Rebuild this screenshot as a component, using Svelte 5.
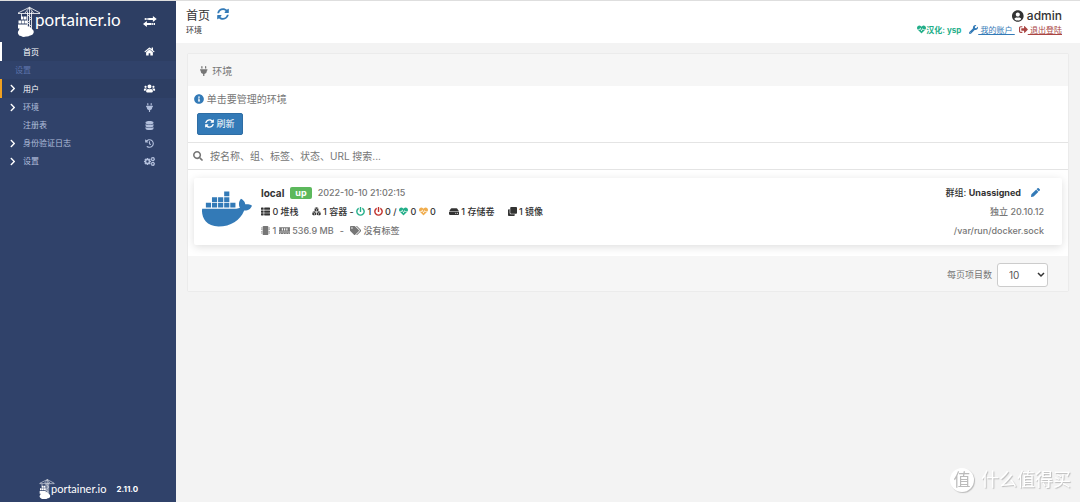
<script>
	let search = $state("");
	let pageSize = $state("10");

	// outline of one toothed wheel with a round hole
	function gear(cx, cy, r, teeth) {
		const points = [];
		for (let i = 0; i < teeth; i++) {
			[[-0.5, 0.78], [-0.32, 1], [0.32, 1], [0.5, 0.78]].forEach(([o, k]) => {
				const a = ((i + o * 0.8) / teeth) * Math.PI * 2;
				points.push(`${(cx + Math.cos(a) * r * k).toFixed(1)} ${(cy + Math.sin(a) * r * k).toFixed(1)}`);
			});
		}
		const h = r * 0.34;
		return `M${points.join("L")}ZM${cx - h} ${cy}a${h} ${h} 0 1 0 ${2 * h} 0a${h} ${h} 0 1 0 ${-2 * h} 0Z`;
	}

	function cube(x, y) {
		return `M${x} ${y}l110-46 110 46-110 46zM${x} ${y + 28}l98 42v126l-98-46zM${x + 220} ${y + 28}l-98 42v126l98-46z`;
	}

	const icons = {
		home: [576, "M280.37 148.26L96 300.11V464a16 16 0 0 0 16 16l112.06-.29a16 16 0 0 0 15.92-16V368a16 16 0 0 1 16-16h64a16 16 0 0 1 16 16v95.64a16 16 0 0 0 16 16.05L464 480a16 16 0 0 0 16-16V300L295.67 148.26a12.19 12.19 0 0 0-15.3 0zM571.6 251.47L488 182.56V44.05a12 12 0 0 0-12-12h-56a12 12 0 0 0-12 12v72.61L318.47 43a48 48 0 0 0-61 0L4.34 251.47a12 12 0 0 0-1.6 16.9l25.5 31A12 12 0 0 0 45.15 301l235.22-193.74a12.19 12.19 0 0 1 15.3 0L530.9 301a12 12 0 0 0 16.9-1.6l25.5-31a12 12 0 0 0-1.7-16.93z"],
		users: [640, "M96 224c35.3 0 64-28.7 64-64s-28.7-64-64-64-64 28.7-64 64 28.7 64 64 64zm448 0c35.3 0 64-28.7 64-64s-28.7-64-64-64-64 28.7-64 64 28.7 64 64 64zm32 32h-64c-17.6 0-33.5 7.1-45.1 18.6 40.3 22.1 68.9 62 75.1 109.4h66c17.7 0 32-14.3 32-32v-32c0-35.3-28.7-64-64-64zm-256 0c61.9 0 112-50.1 112-112S381.9 32 320 32 208 82.1 208 144s50.1 112 112 112zm76.8 32h-8.3c-20.8 10-43.9 16-68.5 16s-47.6-6-68.5-16h-8.3C179.6 288 128 339.6 128 403.2V432c0 26.5 21.5 48 48 48h288c26.5 0 48-21.5 48-48v-28.8c0-63.6-51.6-115.2-115.2-115.2zm-223.7-13.4C161.5 263.1 145.6 256 128 256H64c-35.3 0-64 28.7-64 64v32c0 17.7 14.3 32 32 32h65.9c6.3-47.4 34.9-87.3 75.2-109.4z"],
		plug: [384, "M320,32a32,32,0,0,0-64,0v96h64Zm48,128H16A16,16,0,0,0,0,176v32a16,16,0,0,0,16,16H32v32A160.07,160.07,0,0,0,160,412.8V512h64V412.8A160.07,160.07,0,0,0,352,256V224h16a16,16,0,0,0,16-16V176A16,16,0,0,0,368,160ZM128,32a32,32,0,0,0-64,0v96h64Z"],
		database: [448, "M448 73.143v45.714C448 159.143 347.667 192 224 192S0 159.143 0 118.857V73.143C0 32.857 100.333 0 224 0s224 32.857 224 73.143zM448 176v102.857C448 319.143 347.667 352 224 352S0 319.143 0 278.857V176c48.125 33.143 136.208 48.572 224 48.572S399.874 209.143 448 176zm0 160v102.857C448 479.143 347.667 512 224 512S0 479.143 0 438.857V336c48.125 33.143 136.208 48.572 224 48.572S399.874 369.143 448 336z"],
		history: [512, "M504 255.531c.253 136.64-111.18 248.372-247.82 248.468-59.015.042-113.223-20.53-155.822-54.911-11.077-8.94-11.905-25.541-1.839-35.607l11.267-11.267c8.609-8.609 22.353-9.551 31.891-1.984C173.062 425.135 212.781 440 256 440c101.705 0 184-82.311 184-184 0-101.705-82.311-184-184-184-48.814 0-93.149 18.969-126.068 49.932l50.754 50.754c10.08 10.08 2.941 27.314-11.313 27.314H24c-8.837 0-16-7.163-16-16V38.627c0-14.254 17.234-21.393 27.314-11.314l49.372 49.372C129.209 34.136 189.552 8 256 8c136.81 0 247.747 110.78 248 247.531zm-180.912 78.784l9.823-12.63c8.138-10.463 6.253-25.542-4.21-33.679L288 256.349V152c0-13.255-10.745-24-24-24h-16c-13.255 0-24 10.745-24 24v135.651l65.409 50.874c10.463 8.137 25.541 6.253 33.679-4.21z"],
		cogs: [640, gear(205, 256, 205, 8) + gear(510, 122, 130, 6) + gear(510, 390, 130, 6)],
		chevron: [320, "M285.5 273L91 467.3c-9.4 9.4-24.6 9.4-34 0l-22.600-22.700c-9.400-9.400-9.400-24.500 0-33.900L188.500 256 34.500 101.300c-9.300-9.400-9.300-24.500 0-33.900L57 44.700c9.400-9.400 24.600-9.400 34 0L285.500 239c9.400 9.400 9.400 24.600 0 34z"],
		toggle: [640, "M240 90h220V0l180 140-180 140V190H240zM160 90h55v100h-55zM80 90h55v100H80zM400 322H180v-90L0 372l180 140v-90h220zM425 322h55v100h-55zM505 322h55v100h-55z"],
		sync: [512, "M370.72 133.28C339.458 104.008 298.888 87.962 255.848 88c-77.458.068-144.328 53.178-162.791 126.85-1.344 5.363-6.122 9.15-11.651 9.15H24.103c-7.498 0-13.194-6.807-11.807-14.176C33.933 94.924 134.813 8 256 8c66.448 0 126.791 26.136 171.315 68.685L463.03 40.97C478.149 25.851 504 36.559 504 57.941V192c0 13.255-10.745 24-24 24H345.941c-21.382 0-32.09-25.851-16.971-40.971l41.75-41.749zM32 296h134.059c21.382 0 32.09 25.851 16.971 40.971l-41.75 41.75c31.262 29.273 71.835 45.319 114.876 45.28 77.418-.07 144.315-53.144 162.787-126.849 1.344-5.363 6.122-9.15 11.651-9.15h57.304c7.498 0 13.194 6.807 11.807 14.176C478.067 417.076 377.187 504 256 504c-66.448 0-126.791-26.136-171.315-68.685L48.97 471.03C33.851 486.149 8 475.441 8 454.059V320c0-13.255 10.745-24 24-24z"],
		search: [512, "M505 442.7L405.3 343c-4.5-4.5-10.6-7-17-7H372c27.6-35.3 44-79.7 44-128C416 93.1 322.9 0 208 0S0 93.1 0 208s93.1 208 208 208c48.3 0 92.7-16.4 128-44v16.3c0 6.4 2.5 12.5 7 17l99.7 99.7c9.4 9.4 24.6 9.4 33.9 0l28.3-28.3c9.4-9.4 9.4-24.6.1-34zM208 336c-70.7 0-128-57.2-128-128 0-70.7 57.2-128 128-128 70.7 0 128 57.2 128 128 0 70.7-57.2 128-128 128z"],
		info: [512, "M256 8C119.043 8 8 119.083 8 256c0 136.997 111.043 248 248 248s248-111.003 248-248C504 119.083 392.957 8 256 8zm0 110c23.196 0 42 18.804 42 42s-18.804 42-42 42-42-18.804-42-42 18.804-42 42-42zm56 254c0 6.627-5.373 12-12 12h-88c-6.627 0-12-5.373-12-12v-24c0-6.627 5.373-12 12-12h12v-64h-12c-6.627 0-12-5.373-12-12v-24c0-6.627 5.373-12 12-12h64c6.627 0 12 5.373 12 12v100h12c6.627 0 12 5.373 12 12v24z"],
		user: [496, "M248 8C111 8 0 119 0 256s111 248 248 248 248-111 248-248S385 8 248 8zm0 96c48.6 0 88 39.4 88 88s-39.4 88-88 88-88-39.4-88-88 39.4-88 88-88zm0 344c-58.7 0-111.3-26.6-146.5-68.2 18.8-35.4 55.6-59.8 98.5-59.8 2.4 0 4.8.4 7.1 1.1 13 4.2 26.6 6.9 40.9 6.9 14.3 0 28-2.7 40.9-6.9 2.3-.7 4.7-1.1 7.1-1.1 42.9 0 79.7 24.4 98.5 59.8C359.3 421.4 306.7 448 248 448z"],
		heart: [512, "M320.2 243.8l-49.7 99.4c-6 12.1-23.4 11.7-28.9-.6l-56.9-126.3-30 71.7H60.6l182.5 186.5c7.1 7.3 18.6 7.3 25.7 0L451.4 288H342.3l-22.1-44.2zM473.7 73.9l-2.4-2.5c-51.5-52.6-135.8-52.6-187.4 0L256 100l-27.9-28.5c-51.5-52.7-135.9-52.7-187.4 0l-2.4 2.4C-10.4 123.7-12.5 203 31 256h102.4l35.9-86.2c5.4-12.9 23.6-13.2 29.4-.4l58.2 129.3 49-97.9c5.9-11.8 22.7-11.8 28.6 0l27.6 55.2H481c43.5-53 41.4-132.3-7.3-182.1z"],
		wrench: [512, "M507.73 109.1c-2.24-9.03-13.54-12.09-20.12-5.51l-74.36 74.36-67.88-11.31-11.31-67.88 74.36-74.36c6.62-6.62 3.43-17.9-5.66-20.16-47.38-11.74-99.55.91-136.58 37.93-39.64 39.64-50.55 97.1-34.05 147.2L18.74 402.76c-24.99 24.99-24.99 65.51 0 90.5 24.99 24.99 65.51 24.99 90.5 0l213.21-213.21c50.12 16.71 107.47 5.68 147.37-34.22 37.07-37.07 49.7-89.32 37.91-136.73zM64 472c-13.25 0-24-10.75-24-24 0-13.26 10.75-24 24-24s24 10.74 24 24c0 13.25-10.75 24-24 24z"],
		logout: [512, "M497 273L329 441c-15 15-41 4.5-41-17v-96H152c-13.3 0-24-10.7-24-24v-96c0-13.3 10.7-24 24-24h136V88c0-21.4 25.9-32 41-17l168 168c9.3 9.4 9.3 24.6 0 34zM192 436v-40c0-6.6-5.4-12-12-12H96c-17.7 0-32-14.3-32-32V160c0-17.7 14.3-32 32-32h84c6.6 0 12-5.4 12-12V76c0-6.6-5.4-12-12-12H96c-53 0-96 43-96 96v192c0 53 43 96 96 96h84c6.6 0 12-5.4 12-12z"],
		list: [512, "M0 56a24 24 0 0 1 24-24h101a24 24 0 0 1 24 24v80a24 24 0 0 1-24 24H24a24 24 0 0 1-24-24zM181 56a24 24 0 0 1 24-24h283a24 24 0 0 1 24 24v80a24 24 0 0 1-24 24H205a24 24 0 0 1-24-24zM0 216a24 24 0 0 1 24-24h101a24 24 0 0 1 24 24v80a24 24 0 0 1-24 24H24a24 24 0 0 1-24-24zM181 216a24 24 0 0 1 24-24h283a24 24 0 0 1 24 24v80a24 24 0 0 1-24 24H205a24 24 0 0 1-24-24zM0 376a24 24 0 0 1 24-24h101a24 24 0 0 1 24 24v80a24 24 0 0 1-24 24H24a24 24 0 0 1-24-24zM181 376a24 24 0 0 1 24-24h283a24 24 0 0 1 24 24v80a24 24 0 0 1-24 24H205a24 24 0 0 1-24-24z"],
		cubes: [512, cube(146, 62) + cube(18, 290) + cube(274, 290)],
		power: [512, "M400 54.1c63 45 104 118.6 104 201.9 0 136.8-110.8 247.7-247.5 248C120 504.3 8.2 393 8 256.4 7.9 173.1 48.9 99.3 111.8 54.2c11.7-8.3 28-4.8 35 7.7L162.6 90c5.9 10.5 3.1 23.8-6.6 31-41.5 30.8-68 79.6-68 134.9-.1 92.3 74.5 168.1 168 168.1 91.6 0 168.6-74.2 168-169.1-.3-51.8-24.7-101.8-68.1-134-9.7-7.2-12.4-20.5-6.5-30.9l15.8-28.1c7-12.4 23.2-16.1 34.8-7.8zM296 264V24c0-13.3-10.7-24-24-24h-32c-13.3 0-24 10.7-24 24v240c0 13.3 10.7 24 24 24h32c13.3 0 24-10.7 24-24z"],
		hdd: [576, "M576 304v96c0 26.51-21.49 48-48 48H48c-26.51 0-48-21.49-48-48v-96c0-26.51 21.49-48 48-48h480c26.51 0 48 21.49 48 48zm-48-80a79.557 79.557 0 0 1 30.777 6.165L462.25 85.374A48.003 48.003 0 0 0 422.311 64H153.689a48 48 0 0 0-39.938 21.374L17.223 230.165A79.557 79.557 0 0 1 48 224h480zm-48 96c-17.673 0-32 14.327-32 32s14.327 32 32 32 32-14.327 32-32-14.327-32-32-32zm-96 0c-17.673 0-32 14.327-32 32s14.327 32 32 32 32-14.327 32-32-14.327-32-32-32z"],
		clone: [512, "M464 0c26.51 0 48 21.49 48 48v288c0 26.51-21.49 48-48 48H176c-26.51 0-48-21.49-48-48V48c0-26.51 21.49-48 48-48h288M176 416c-44.112 0-80-35.888-80-80V128H48c-26.51 0-48 21.49-48 48v288c0 26.51 21.49 48 48 48h288c26.51 0 48-21.49 48-48v-48H176z"],
		chip: [512, "M144 0h224a48 48 0 0 1 48 48v416a48 48 0 0 1-48 48H144a48 48 0 0 1-48-48V48a48 48 0 0 1 48-48z" + [88, 184, 280, 376].map((y) => `M0 ${y + 14}h24v-14h48v48H24v-14H0zM512 ${y + 14}h-24v-14h-48v48h48v-14h24z`).join("")],
		memory: [640, "M640 130.94V96c0-17.67-14.33-32-32-32H32C14.33 64 0 78.33 0 96v34.94c18.6 6.61 32 24.19 32 45.06s-13.4 38.45-32 45.06V320h640v-98.94c-18.6-6.61-32-24.19-32-45.06s13.4-38.45 32-45.06zM224 256h-64V128h64v128zm128 0h-64V128h64v128zm128 0h-64V128h64v128zM0 448h64v-26.67c0-8.84 7.16-16 16-16s16 7.16 16 16V448h128v-26.67c0-8.84 7.16-16 16-16s16 7.16 16 16V448h128v-26.67c0-8.84 7.16-16 16-16s16 7.16 16 16V448h128v-26.67c0-8.84 7.16-16 16-16s16 7.16 16 16V448h64v-96H0v96z"],
		tags: [640, "M497.941 225.941L286.059 14.059A48 48 0 0 0 252.118 0H48C21.49 0 0 21.49 0 48v204.118a48 48 0 0 0 14.059 33.941l211.882 211.882c18.744 18.745 49.136 18.746 67.882 0l204.118-204.118c18.745-18.745 18.745-49.137 0-67.882zM112 160c-26.51 0-48-21.49-48-48s21.49-48 48-48 48 21.49 48 48-21.49 48-48 48zm513.941 133.823L421.823 497.941c-18.745 18.745-49.137 18.745-67.882 0l-.36-.36L527.64 323.522c16.999-16.999 26.36-39.6 26.36-63.64s-9.362-46.641-26.36-63.64L331.397 0h48.721a48 48 0 0 1 33.941 14.059l211.882 211.882c18.745 18.745 18.745 49.137 0 67.882z"],
		pencil: [512, "M497.9 142.1l-46.1 46.1c-4.7 4.7-12.3 4.7-17 0l-111-111c-4.7-4.7-4.7-12.3 0-17l46.1-46.1c18.7-18.7 49.1-18.7 67.9 0l60.1 60.1c18.8 18.7 18.8 49.1 0 67.9zM284.2 99.8L21.6 362.4.4 483.9c-2.9 16.4 11.4 30.6 27.8 27.8l121.5-21.3 262.6-262.6c4.7-4.7 4.7-12.3 0-17l-111-111c-4.8-4.7-12.4-4.7-17.1 0z"],
		docker: [640, "M349.9 236.3h-66.1v-59.4h66.1v59.4zm0-204.3h-66.1v60.7h66.1V32zm78.2 144.8H362v59.4h66.1v-59.4zm-156.3-72.1h-66.1v60.1h66.1v-60.1zm78.1 0h-66.1v60.1h66.1v-60.1zm276.8 100c-14.4-9.7-47.6-13.2-73.1-8.4-3.3-24-16.7-44.9-41.1-63.7l-14-9.3-9.3 14c-18.4 27.8-23.4 73.6-3.7 103.8-8.7 4.7-25.8 11.1-48.4 10.7H2.4c-8.7 50.8 5.8 116.8 44 162.1 37.1 43.9 92.7 66.2 165.4 66.2 157.4 0 273.9-72.5 328.4-204.2 21.4.4 67.6.1 91.3-45.2 1.5-2.5 6.6-13.2 8.5-17.1l-13.3-8.9zm-511.1-27.9h-66v59.4h66.1v-59.4zm78.1 0h-66.1v59.4h66.1v-59.4zm78.1 0h-66.1v59.4h66.1v-59.4zm-78.1-72.1h-66.1v60.1h66.1v-60.1z"],
	};

	const menu = [
		{ label: "首页", icon: "home", state: "current" },
		{ title: "设置" },
		{ label: "用户", icon: "users", sub: true, state: "hover" },
		{ label: "环境", icon: "plug", sub: true },
		{ label: "注册表", icon: "database" },
		{ label: "身份验证日志", icon: "history", sub: true },
		{ label: "设置", icon: "cogs", sub: true },
	];
</script>

{#snippet icon(name)}
	<svg class="icon i-{name}" viewBox="0 0 {icons[name][0]} 512" aria-hidden="true">
		<path d={icons[name][1]} fill-rule="evenodd" />
	</svg>
{/snippet}

{#snippet crane()}
	<svg class="crane" viewBox="0 0 24 30" aria-hidden="true">
		<path class="line" d="M12.500 1v23M10.500 5v18M14.500 5v18M1 7h22M1 6.500L12.500 .8 23 6.500M12.500 1L8 6.500M12.500 1l4 5.500M10.500 8l4 4-4 4 4 4M4.500 7v4" />
		<path d="M4 10h2.500v3H4zM7 10h2.500v3H7zM1.500 14h2.500v3H1.500zM4.500 14H7v3H4.500zM7.500 14H10v3H7.500zM1 18h9v4H1z" />
		<path d="M4 29.500a3.500 3.500 0 0 1-2-6 4 4 0 0 1 6-3 5 5 0 0 1 7 2 3.500 3.500 0 0 1-2 6.500 5 5 0 0 1-4 1 5 5 0 0 1-5-.5z" />
	</svg>
{/snippet}

<div class="layout">
	<aside>
		<div class="brand">
			<a class="logo" href="#home">{@render crane()}<span>portainer.io</span></a>
			<button class="plain" aria-label="toggle sidebar">{@render icon("toggle")}</button>
		</div>
		<nav>
			{#each menu as item}
				{#if item.title}
					<div class="section">{item.title}</div>
				{:else}
					<a class="item {item.state}" href="#{item.icon}">
						<span class="arrow">{#if item.sub}{@render icon("chevron")}{/if}</span>
						<span class="label">{item.label}</span>
						{@render icon(item.icon)}
					</a>
				{/if}
			{/each}
		</nav>
		<div class="version">
			<span class="logo small">{@render crane()}<span>portainer.io</span></span>
			<strong>2.11.0</strong>
		</div>
	</aside>

	<main>
		<header>
			<div>
				<h1>首页 <button class="plain" aria-label="reload">{@render icon("sync")}</button></h1>
				<p>环境</p>
			</div>
			<div class="account">
				<div class="name">{@render icon("user")} admin</div>
				<div class="links">
					<strong>{@render icon("heart")}汉化: ysp</strong>
					<a href="#account">{@render icon("wrench")}<span>&nbsp;我的账户&nbsp;</span></a>
					<a class="logout" href="#logout">{@render icon("logout")}<span>&nbsp;退出登陆</span></a>
				</div>
			</div>
		</header>

		<section class="panel">
			<h2>{@render icon("plug")} 环境</h2>
			<div class="actions">
				<p>{@render icon("info")} 单击要管理的环境</p>
				<button class="refresh">{@render icon("sync")} 刷新</button>
			</div>
			<label class="search">
				{@render icon("search")}
				<input type="text" aria-label="search" placeholder="按名称、组、标签、状态、URL 搜索..." bind:value={search} />
			</label>

			<article class="endpoint">
				{@render icon("docker")}
				<div class="details">
					<div class="row">
						<strong>local</strong>
						<span class="badge">up</span>
						<span class="muted">2022-10-10 21:02:15</span>
					</div>
					<div class="row stats">
						<span>{@render icon("list")} 0 堆栈</span>
						<span>
							{@render icon("cubes")} 1 容器 -
							<span class="green">{@render icon("power")}</span> 1
							<span class="red">{@render icon("power")}</span> 0 /
							<span class="green">{@render icon("heart")}</span> 0
							<span class="orange">{@render icon("heart")}</span> 0
						</span>
						<span>{@render icon("hdd")} 1 存储卷</span>
						<span>{@render icon("clone")} 1 镜像</span>
					</div>
					<div class="row muted">
						<span>{@render icon("chip")} 1 {@render icon("memory")} 536.9 MB</span>
						<span>-</span>
						<span>{@render icon("tags")} 没有标签</span>
					</div>
				</div>
				<div class="meta">
					<div class="row"><span>群组: <b>Unassigned</b></span> <button class="plain" aria-label="edit">{@render icon("pencil")}</button></div>
					<div class="row muted">独立 20.10.12</div>
					<div class="row muted">/var/run/docker.sock</div>
				</div>
			</article>

			<footer>
				<label for="size">每页项目数</label>
				<div class="select">
					<select id="size" bind:value={pageSize}>
						<option>10</option>
						<option>25</option>
						<option>50</option>
						<option>100</option>
					</select>
					<svg viewBox="0 0 8 6" aria-hidden="true"><path d="M1 1l3 3 3-3" /></svg>
				</div>
			</footer>
		</section>
	</main>

	<div class="watermark"><span class="seal">值</span><span>什么值得买</span></div>
</div>

<style>
	:global(body) {
		background: #f3f3f3;
	}

	.layout {
		display: flex;
		min-height: 100vh;
		box-sizing: border-box;
		border-top: 1px solid #dedede;
		font: 400 9px/12px Inter, "Noto Sans CJK SC", sans-serif;
		color: #333;
	}

	h1, h2, p {
		margin: 0;
		font-weight: 400;
	}

	a {
		color: inherit;
		text-decoration: none;
	}

	button, input, select {
		font: inherit;
		color: inherit;
	}

	.plain {
		display: inline-flex;
		padding: 0;
		border: 0;
		background: none;
	}

	.icon {
		flex: none;
		height: 9px;
		fill: currentColor;
		vertical-align: -1px;
	}

	/* sidebar */
	aside {
		flex: none;
		display: flex;
		flex-direction: column;
		width: 176px;
		background: #30426a;
		color: #fff;
	}

	.brand {
		display: flex;
		align-items: center;
		justify-content: space-between;
		height: 41px;
		padding: 0 19px 0 17px;
		background: #2d3e63;
	}

	.brand .icon {
		height: 11px;
	}

	.logo {
		display: flex;
		align-items: center;
		font: 400 17px/20px Lato, sans-serif;
	}

	.crane {
		width: 24px;
		height: 31px;
		margin-right: -6px;
		fill: #fff;
	}

	.logo span {
		padding-bottom: 4px;
	}

	.line {
		fill: none;
		stroke: #fff;
		stroke-width: 0.8;
	}

	.item, .section {
		display: flex;
		align-items: center;
		height: 18px;
		box-sizing: border-box;
		font-size: 8px;
	}

	.item {
		padding-right: 20px;
		border-left: 2px solid transparent;
		color: #b2bfdc;
	}

	.item > .icon {
		width: 13px;
	}

	.current, .hover {
		height: 19px;
		background: #2d3e63;
		border-color: #fff;
		color: #fff;
	}

	.hover {
		border-color: #f0a020;
	}

	.section {
		padding-left: 15px;
		color: #5d74ab;
	}

	.arrow {
		display: flex;
		justify-content: center;
		width: 21px;
		color: #fff;
	}

	.label {
		flex: 1;
	}

	.version {
		display: flex;
		align-items: center;
		gap: 10px;
		margin-top: auto;
		padding: 0 0 3px 39px;
		font-size: 8px;
	}

	.small {
		font-size: 11px;
	}

	.small .crane {
		width: 16px;
		height: 20px;
		margin-right: -4px;
	}

	.small span {
		padding: 0;
	}

	/* page header */
	main {
		flex: 1;
		min-width: 0;
	}

	header {
		display: flex;
		justify-content: space-between;
		height: 42px;
		box-sizing: border-box;
		padding: 7px 18px 0 10px;
		background: #fff;
	}

	h1, .name {
		font-size: 12px;
		line-height: 16px;
	}

	.name {
		font-weight: 500;
	}

	h1 .icon {
		height: 12px;
		margin-left: 4px;
		color: #337ab7;
		vertical-align: -2px;
	}

	header p {
		font-size: 8px;
	}

	.account {
		text-align: right;
	}

	.name .icon {
		height: 12px;
		vertical-align: -2px;
	}

	.links {
		display: flex;
		gap: 4px;
		font-size: 8px;
	}

	.links strong {
		margin-right: 4px;
		color: #23ae89;
	}

	.links a {
		color: #337ab7;
	}

	.links a span {
		text-decoration: underline;
	}

	.links .logout {
		color: #a94442;
	}

	/* environments */
	.panel {
		margin: 10px 11px;
		border: 1px solid #ebebeb;
		border-radius: 2px;
		background: #fff;
	}

	h2 {
		padding: 8px 12px 6px;
		background: #f6f6f6;
		color: #767676;
		font-size: 10px;
		line-height: 18px;
	}

	h2 .icon {
		height: 10px;
		margin-right: 2px;
	}

	.actions {
		padding: 5px 6px 7px;
		border-bottom: 1px solid #e4e4e4;
		color: #767676;
		font-size: 10px;
		line-height: 16px;
	}

	.i-info {
		height: 10px;
		color: #337ab7;
	}

	.refresh {
		height: 22px;
		margin: 6px 3px 0;
		padding: 0 7px;
		border: 1px solid #2e6da4;
		border-radius: 2px;
		background: #337ab7;
		color: #fff;
		font-size: 9px;
		line-height: 18px;
	}

	.search {
		display: flex;
		align-items: center;
		gap: 7px;
		height: 26px;
		padding: 0 5px;
		border-bottom: 1px solid #e4e4e4;
		color: #767676;
		font-size: 10px;
	}

	.search .icon {
		height: 10px;
	}

	input {
		flex: 1;
		padding: 0;
		border: 0;
		outline: 0;
		background: none;
	}

	input::placeholder {
		color: #767676;
	}

	.endpoint {
		display: flex;
		align-items: center;
		gap: 9px;
		margin: 8px 6px 11px;
		padding: 5px 18px 5px 8px;
		border-radius: 2px;
		box-shadow: 0 2px 8px #0002;
	}

	.i-docker {
		width: 50px;
		height: 40px;
		margin-bottom: 5px;
		color: #337ab7;
	}

	.details {
		flex: 1;
	}

	.row {
		display: flex;
		align-items: center;
		gap: 6px;
		height: 19px;
		font-weight: 500;
		white-space: nowrap;
	}

	.row strong {
		font-size: 10px;
	}

	.stats {
		gap: 13px;
	}

	.muted {
		color: #767676;
	}

	.badge {
		padding: 0 5px;
		border-radius: 2px;
		background: #5cb85c;
		color: #fff;
		font-weight: 700;
	}

	.green {
		color: #23ae89;
	}

	.red {
		color: #c0302c;
	}

	.orange {
		color: #f0ad4e;
	}

	.meta .row {
		justify-content: flex-end;
	}

	.meta button {
		margin: 0 4px;
		color: #337ab7;
	}

	footer {
		display: flex;
		align-items: center;
		justify-content: flex-end;
		gap: 5px;
		padding: 7px 20px 4px;
		background: #f6f6f6;
		color: #767676;
	}

	.select {
		display: grid;
		align-items: center;
	}

	.select > * {
		grid-area: 1 / 1;
	}

	select {
		appearance: none;
		width: 51px;
		height: 24px;
		padding: 0 11px;
		border: 1px solid #ccc;
		border-radius: 3px;
		background: #fff;
		color: #555;
		font-size: 10px;
	}

	.select svg {
		justify-self: end;
		width: 8px;
		margin-right: 3px;
		fill: none;
		stroke: #333;
		stroke-width: 1.5;
		pointer-events: none;
	}

	.watermark {
		position: fixed;
		right: 9px;
		bottom: 9px;
		display: flex;
		align-items: center;
		gap: 7px;
		color: #fff;
		font-size: 18px;
		line-height: 26px;
		text-shadow: 1px 1px 1px #bbb;
		pointer-events: none;
	}

	.seal {
		width: 24px;
		border-radius: 50%;
		background: #fff;
		box-shadow: 1px 1px 1px #bbb;
		color: #bbb;
		font-size: 17px;
		line-height: 24px;
		text-align: center;
		text-shadow: none;
	}
</style>
